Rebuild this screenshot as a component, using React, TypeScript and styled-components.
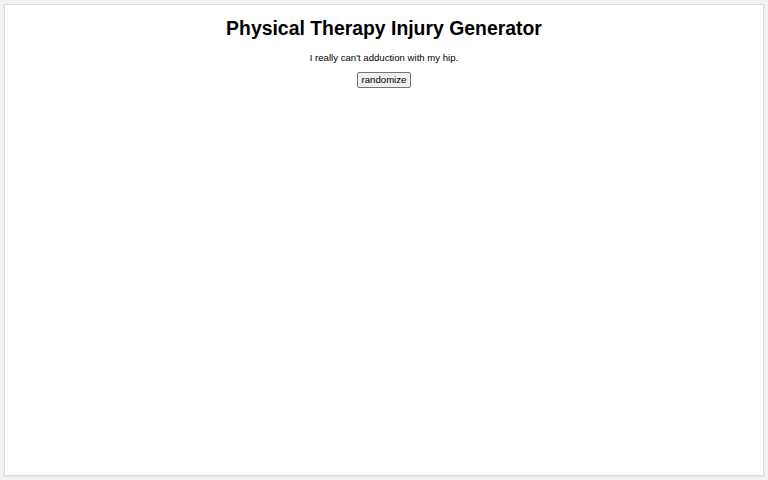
import React, { FC, ReactElement, useState } from 'react';
import { createGlobalStyle, styled } from 'styled-components';

const GlobalStyle = createGlobalStyle`
    html, body {
        margin: 0;
        padding: 0;
        background: #f3f3f3;
        font-family: "Liberation Sans", Arial, sans-serif;
    }
`

const Page = styled.div`
    padding: 4px;
    box-sizing: border-box;
    height: 480px;
`

const Card = styled.main`
    box-sizing: border-box;
    height: 472px;
    background: #ffffff;
    border: 1px solid #dcdcdc;
    box-shadow: 0 1px 2px rgba(0, 0, 0, 0.06);
    display: flex;
    flex-direction: column;
    align-items: center;
`

const Title = styled.h1`
    margin: 12px 0 0 0;
    font-size: 19.4px;
    font-weight: bold;
    color: #000;
`

const Injury = styled.p`
    margin: 12px 0 0 0;
    font-size: 9.6px;
    color: #000;
`

const RandomButton = styled.button`
    margin-top: 9px;
    font-family: "Liberation Sans", Arial, sans-serif;
    font-size: 9.6px;
    padding: 1px 4px 2px 4px;
    background: #efefef;
    border: 1px solid #767676;
    border-radius: 2px;
    color: #000;
`

const verbs = ['adduction', 'abduction', 'flex', 'extend', 'rotate'];
const parts = ['hip', 'knee', 'shoulder', 'elbow', 'ankle'];

const App: FC = (): ReactElement => {
    const [injury, setInjury] = useState<string>("I really can't adduction with my hip.");

    const randomize = function() {
        const verb = verbs[Math.floor(Math.random() * verbs.length)];
        const part = parts[Math.floor(Math.random() * parts.length)];
        setInjury(`I really can't ${verb} with my ${part}.`);
    }

    return (
        <Page>
            <GlobalStyle />
            <Card>
                <Title>Physical Therapy Injury Generator</Title>
                <Injury>{injury}</Injury>
                <RandomButton onClick={randomize}>randomize</RandomButton>
            </Card>
        </Page>
    )
}

export default App;
